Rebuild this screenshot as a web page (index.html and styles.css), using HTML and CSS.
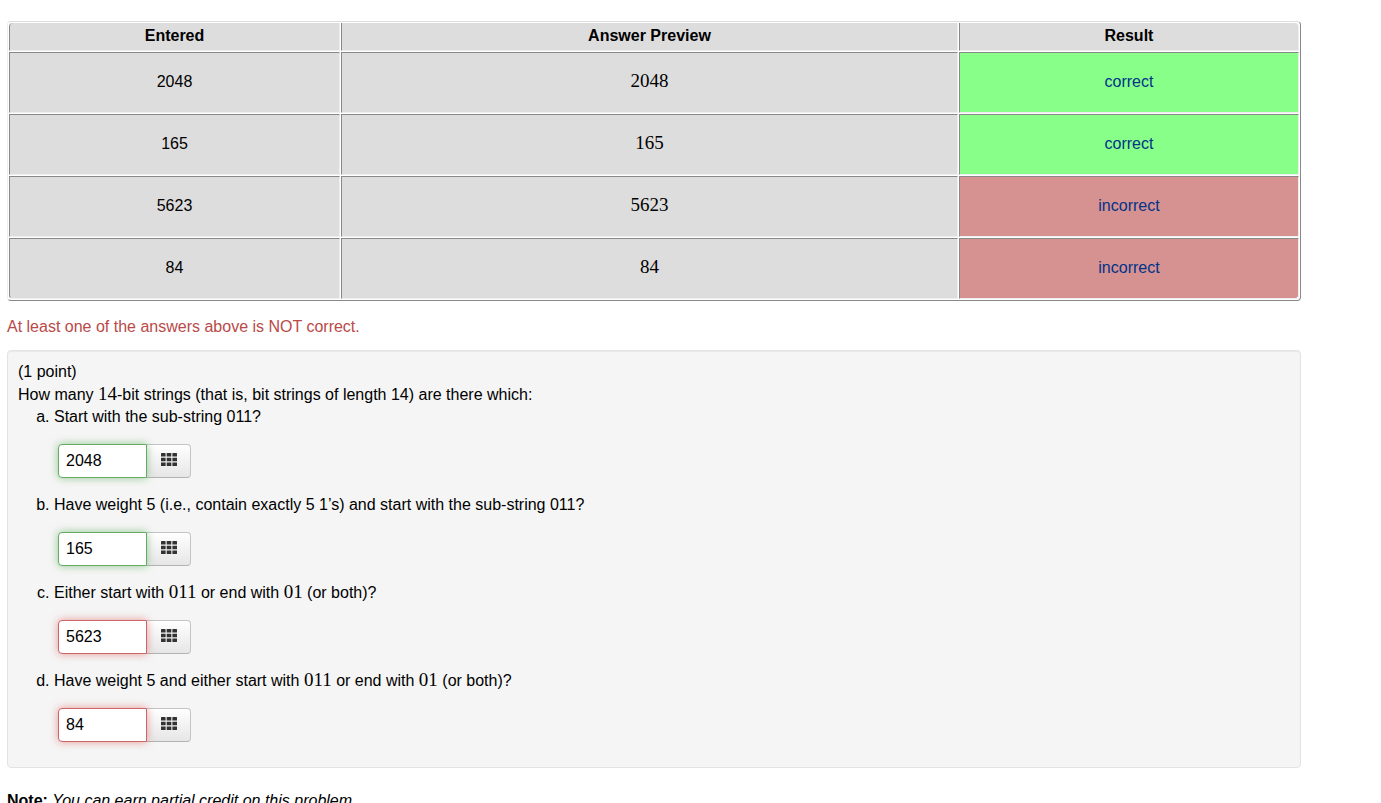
FILE: index.html
```html
<!DOCTYPE html>
<html lang="en">
<head>
    <meta charset="UTF-8">
    <meta name="viewport" content="width=device-width, initial-scale=1.0">
    <title>Problem</title>
    <link rel="stylesheet" href="styles.css">
</head>
<body>
    <!-- shared keypad icon -->
    <svg class="defs" width="0" height="0" aria-hidden="true">
        <symbol id="grid" viewBox="0 0 16 13">
            <path d="M.6 0H4q.6 0 .6.6v3H0v-3Q0 0 .6 0zM5.700 0h4.600v3.600H5.700zM11.400 0h4q.6 0 .6.6v3h-4.600zM0 4.700h4.600v3.600H0zM5.700 4.700h4.600v3.600H5.700zM11.400 4.700H16v3.600h-4.600zM0 9.400h4.600V13h-4Q0 13 0 12.400zM5.700 9.400h4.600V13H5.700zM11.400 9.400H16v3q0 .6-.6.6h-4z"/>
        </symbol>
    </svg>

    <table class="results">
        <thead>
            <tr>
                <th class="col-entered">Entered</th>
                <th class="col-preview">Answer Preview</th>
                <th class="col-result">Result</th>
            </tr>
        </thead>
        <tbody>
            <tr>
                <td>2048</td>
                <td><span class="math">2048</span></td>
                <td class="correct"><a href="#ans1">correct</a></td>
            </tr>
            <tr>
                <td>165</td>
                <td><span class="math">165</span></td>
                <td class="correct"><a href="#ans2">correct</a></td>
            </tr>
            <tr>
                <td>5623</td>
                <td><span class="math">5623</span></td>
                <td class="incorrect"><a href="#ans3">incorrect</a></td>
            </tr>
            <tr>
                <td>84</td>
                <td><span class="math">84</span></td>
                <td class="incorrect"><a href="#ans4">incorrect</a></td>
            </tr>
        </tbody>
    </table>

    <p class="summary">At least one of the answers above is NOT correct.</p>

    <form class="problem">
        <div class="points">(1 point)</div>
        <div>How many <span class="math">14</span>-bit strings (that is, bit strings of length 14) are there which:</div>
        <ol class="parts">
            <li>
                <label for="ans1">Start with the sub-string 011?</label>
                <div class="answer">
                    <input type="text" id="ans1" class="right" value="2048">
                    <button type="button" aria-label="Equation editor"><svg class="icon"><use href="#grid"/></svg></button>
                </div>
            </li>
            <li>
                <label for="ans2">Have weight 5 (i.e., contain exactly 5 1’s) and start with the sub-string 011?</label>
                <div class="answer">
                    <input type="text" id="ans2" class="right" value="165">
                    <button type="button" aria-label="Equation editor"><svg class="icon"><use href="#grid"/></svg></button>
                </div>
            </li>
            <li>
                <label for="ans3">Either start with <span class="math">011</span> or end with <span class="math">01</span> (or both)?</label>
                <div class="answer">
                    <input type="text" id="ans3" class="wrong" value="5623">
                    <button type="button" aria-label="Equation editor"><svg class="icon"><use href="#grid"/></svg></button>
                </div>
            </li>
            <li>
                <label for="ans4">Have weight 5 and either start with <span class="math">011</span> or end with <span class="math">01</span> (or both)?</label>
                <div class="answer">
                    <input type="text" id="ans4" class="wrong" value="84">
                    <button type="button" aria-label="Equation editor"><svg class="icon"><use href="#grid"/></svg></button>
                </div>
            </li>
        </ol>
    </form>

    <p class="note"><b>Note:</b> <i>You can earn partial credit on this problem.</i></p>
</body>
</html>
```
FILE: styles.css
```css
html {
    overflow: hidden;
}
body {
    margin: 0;
    padding: 21px 80px 0 7px;
    font-family: "Liberation Sans", Arial, sans-serif;
    font-size: 16px;
    line-height: 22px;
    color: #000;
    background-color: #fff;
}
.defs {
    display: block;
}
.math {
    font-family: "Liberation Serif", "Times New Roman", serif;
    font-size: 19px;
    line-height: 16px;
}

/* Results table */
.results {
    width: 100%;
    table-layout: fixed;
    border-collapse: separate;
    border-spacing: 1px;
    border: 1px solid;
    border-color: #ddd #888 #888 #eee;
    border-radius: 4px;
    text-align: center;
}
.results th,
.results td {
    box-sizing: border-box;
    padding: 0;
    border: 1px solid;
    border-color: #888 #eee #eee #888;
    background-color: #ddd;
}
.results th {
    height: 28px;
    padding-bottom: 2px;
    border-top: 0;
}
.results td {
    height: 61px;
    padding-bottom: 2px;
}
.results th:first-child {
    border-top-left-radius: 4px;
}
.results th:last-child {
    border-top-right-radius: 4px;
}
.results tr:last-child td:first-child {
    border-bottom-left-radius: 4px;
}
.results tr:last-child td:last-child {
    border-bottom-right-radius: 4px;
}
.col-entered {
    width: 25.7%;
}
.col-preview {
    width: 47.9%;
}
.results .correct {
    background-color: #8f8;
}
.results .incorrect {
    background-color: #d69191;
}
.results a {
    color: #038;
    text-decoration: none;
}

.summary {
    margin: 15px 0 12px;
    color: #b94a48;
}

/* Problem box */
.problem {
    padding: 10px 10px 25px;
    border: 1px solid #e3e3e3;
    border-radius: 4px;
    background-color: #f5f5f5;
    box-shadow: inset 0 1px 1px rgba(0, 0, 0, 0.05);
}
.points {
    margin-bottom: 1px;
}
.parts {
    margin: 0;
    padding-left: 36px;
    list-style: lower-alpha;
}
.parts li + li {
    margin-top: 16px;
}
.answer {
    display: flex;
    margin: 16px 0 0 4px;
}
.answer input {
    box-sizing: border-box;
    width: 89px;
    height: 34px;
    padding: 4px 7px;
    border: 1px solid #ccc;
    border-radius: 4px 0 0 4px;
    font: inherit;
    color: #000;
    background-color: #fff;
    z-index: 1;
}
.answer .right {
    border-color: #6a6;
    box-shadow: 0 0 8px rgba(80, 170, 80, 0.6);
}
.answer .wrong {
    border-color: #c66;
    box-shadow: 0 0 8px rgba(220, 90, 90, 0.6);
}
.answer button {
    display: flex;
    align-items: center;
    justify-content: center;
    width: 44px;
    height: 34px;
    padding: 0 0 3px;
    border: 1px solid #c4c4c4;
    border-left: 0;
    border-bottom-color: #b3b3b3;
    border-radius: 0 4px 4px 0;
    background: linear-gradient(#fff, #e6e6e6);
    color: #333;
    cursor: pointer;
}
.icon {
    width: 16px;
    height: 13px;
    fill: currentColor;
}

.note {
    margin: 22px 0 0;
}
```
